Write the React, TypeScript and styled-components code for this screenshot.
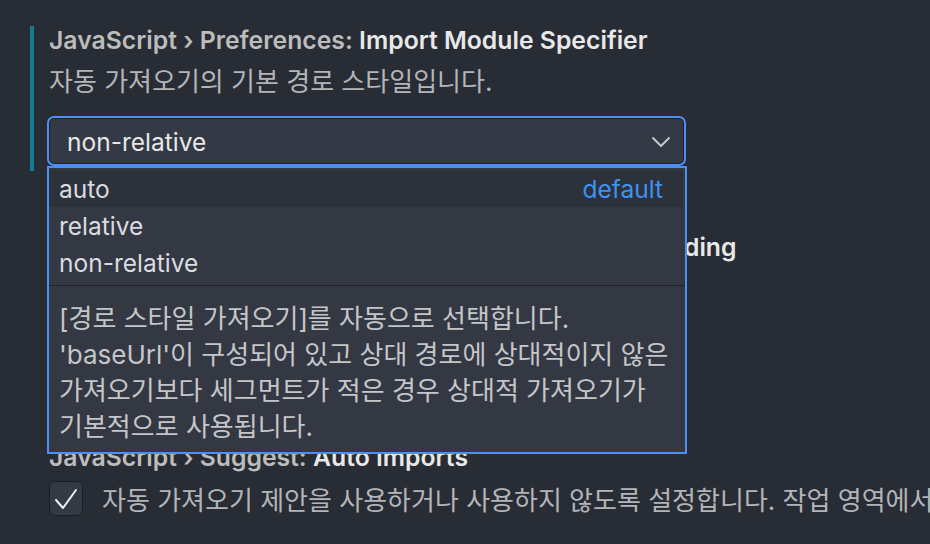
import React, { useState } from 'react';
import styled, { createGlobalStyle } from 'styled-components';

const GlobalStyle = createGlobalStyle`
  html, body {
    margin: 0;
    padding: 0;
    background: #282c34;
    overflow: hidden;
  }

  body {
    font-family: Inter, 'Noto Sans CJK KR', sans-serif;
    font-size: 24.5px;
    -webkit-font-smoothing: antialiased;
  }
`;

const Page = styled.div`
  width: 930px;
  height: 544px;
  padding-top: 26px;
  box-sizing: border-box;
  overflow: hidden;
`;

const Item = styled.div<{ $focused?: boolean; $gap?: number }>`
  position: relative;
  margin-left: 30px;
  margin-top: ${(p) => p.$gap ?? 0}px;
  padding: 0 0 ${(p) => (p.$focused ? '7px' : '0')} 15px;
  border-left: 4px solid ${(p) => (p.$focused ? '#137d94' : 'transparent')};
`;

const Title = styled.div`
  font-size: 24.75px;
  font-weight: 600;
  line-height: 28px;
  color: #e8e8e8;
  white-space: nowrap;

  .category {
    color: #bcbcbc;
  }
`;

const Description = styled.div`
  margin-top: 14px;
  font-size: 26px;
  line-height: 28px;
  color: #b3b5b9;
  white-space: nowrap;
`;

const SelectWrap = styled.div`
  position: relative;
  width: 635px;
  margin-top: 22px;
`;

const SelectBox = styled.div<{ $open?: boolean }>`
  display: flex;
  align-items: center;
  justify-content: space-between;
  height: 46px;
  box-sizing: border-box;
  padding: 2px 12px 0 17px;
  background: #343a45;
  border: 1px solid #1f2329;
  border-radius: 5px;
  color: #e8e8e8;
  outline: ${(p) => (p.$open ? '2px solid #4d8ef7' : 'none')};
`;

const Dropdown = styled.div`
  position: absolute;
  z-index: 10;
  top: 48px;
  left: -2px;
  width: 640px;
  box-sizing: border-box;
  background: #333842;
  border: 2px solid #4d8ef7;
`;

const OptionList = styled.div`
  padding: 2px 2px 4px 0;
`;

const Option = styled.div<{ $active?: boolean }>`
  display: flex;
  align-items: center;
  justify-content: space-between;
  height: 37px;
  padding: 1px 20px 0 10px;
  box-sizing: border-box;
  background: ${(p) => (p.$active ? '#2c313a' : 'transparent')};
  color: #d9dce1;
`;

const DefaultTag = styled.span`
  color: #3d93f5;
`;

const OptionHelp = styled.div`
  border-top: 1px solid #1f2228;
  padding: 15px 10px 7px;
  font-size: 26px;
  line-height: 36px;
  color: #c4c6ca;
  white-space: nowrap;
`;

const CheckRow = styled.div`
  display: flex;
  align-items: center;
  gap: 19px;
  margin-top: 9px;
  font-size: 26px;
  white-space: nowrap;
  color: #b3b5b9;
`;

const CheckBox = styled.div`
  flex: none;
  display: flex;
  align-items: center;
  justify-content: center;
  width: 34px;
  height: 35px;
  box-sizing: border-box;
  background: #343a45;
  border: 1px solid #1b1e23;
  border-radius: 6px;
`;

const Chevron = () => (
  <svg width="20" height="12" viewBox="0 0 20 12" fill="none">
    <path d="M2 2l8 8 8-8" stroke="#c9ccd1" strokeWidth="1.8" strokeLinecap="round" strokeLinejoin="round" />
  </svg>
);

const Check = () => (
  <svg width="24" height="22" viewBox="0 0 24 22" fill="none">
    <path d="M2 12l7 8L22 2" stroke="#f0f0f0" strokeWidth="2" strokeLinecap="round" strokeLinejoin="round" />
  </svg>
);

const options = [
  { value: 'auto', isDefault: true },
  { value: 'relative' },
  { value: 'non-relative' },
];

export default function App() {
  const [hovered, setHovered] = useState('auto');

  return (
    <Page>
      <GlobalStyle />
      <Item $focused>
        <Title>
          <span className="category">JavaScript › Preferences: </span>Import Module Specifier
        </Title>
        <Description>자동 가져오기의 기본 경로 스타일입니다.</Description>
        <SelectWrap>
          <SelectBox $open>
            <span>non-relative</span>
            <Chevron />
          </SelectBox>
          <Dropdown>
            <OptionList>
              {options.map((o) => (
                <Option key={o.value} $active={hovered === o.value} onMouseEnter={() => setHovered(o.value)}>
                  <span>{o.value}</span>
                  {o.isDefault && <DefaultTag>default</DefaultTag>}
                </Option>
              ))}
            </OptionList>
            <OptionHelp>
              [경로 스타일 가져오기]를 자동으로 선택합니다.
              <br />
              'baseUrl'이 구성되어 있고 상대 경로에 상대적이지 않은
              <br />
              가져오기보다 세그먼트가 적은 경우 상대적 가져오기가
              <br />
              기본적으로 사용됩니다.
            </OptionHelp>
          </Dropdown>
        </SelectWrap>
      </Item>
      <Item $gap={62}>
        <Title>
          <span className="category">JavaScript › Preferences: </span>Import Module Specifier Ending
        </Title>
        <Description>자동 가져오기에 대한 기본 경로 끝입니다.</Description>
        <SelectWrap>
          <SelectBox>
            <span>auto</span>
            <Chevron />
          </SelectBox>
        </SelectWrap>
      </Item>
      <Item $gap={72}>
        <Title>
          <span className="category">JavaScript › Suggest: </span>Auto Imports
        </Title>
        <CheckRow>
          <CheckBox>
            <Check />
          </CheckBox>
          <span>자동 가져오기 제안을 사용하거나 사용하지 않도록 설정합니다. 작업 영역에서 열린 파일의 자동 가져오기가 필요합니다.</span>
        </CheckRow>
      </Item>
    </Page>
  );
}
